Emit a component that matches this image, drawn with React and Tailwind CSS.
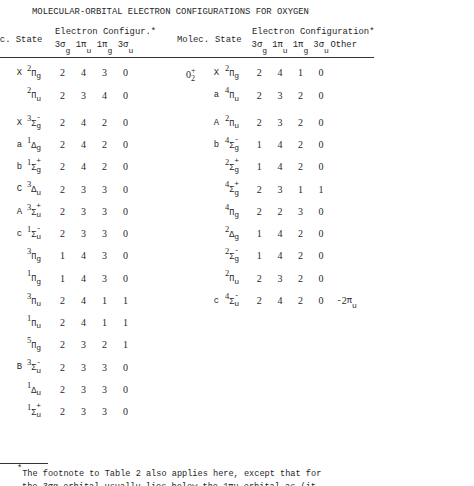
// Scanned table: molecular-orbital electron configurations for oxygen (O2 and O2+).
const leftRows = [
  { l: "X", t: ["2", "Π", "g", ""], n: "2430" },
  { l: "", t: ["2", "Π", "u", ""], n: "2340" },
  { l: "X", t: ["3", "Σ", "g", "-"], n: "2420" },
  { l: "a", t: ["1", "Δ", "g", ""], n: "2420" },
  { l: "b", t: ["1", "Σ", "g", "+"], n: "2420" },
  { l: "C", t: ["3", "Δ", "u", ""], n: "2330" },
  { l: "A", t: ["3", "Σ", "u", "+"], n: "2330" },
  { l: "c", t: ["1", "Σ", "u", "-"], n: "2330" },
  { l: "", t: ["3", "Π", "g", ""], n: "1430" },
  { l: "", t: ["1", "Π", "g", ""], n: "1430" },
  { l: "", t: ["3", "Π", "u", ""], n: "2411" },
  { l: "", t: ["1", "Π", "u", ""], n: "2411" },
  { l: "", t: ["5", "Π", "g", ""], n: "2321" },
  { l: "B", t: ["3", "Σ", "u", "-"], n: "2330" },
  { l: "", t: ["1", "Δ", "u", ""], n: "2330" },
  { l: "", t: ["1", "Σ", "u", "+"], n: "2330" },
];

const rightRows = [
  { mol: true, l: "X", t: ["2", "Π", "g", ""], n: "2410" },
  { l: "a", t: ["4", "Π", "u", ""], n: "2320" },
  { l: "A", t: ["2", "Π", "u", ""], n: "2320" },
  { l: "b", t: ["4", "Σ", "g", "-"], n: "1420" },
  { l: "", t: ["2", "Σ", "g", "+"], n: "1420" },
  { l: "", t: ["4", "Σ", "g", "+"], n: "2311" },
  { l: "", t: ["4", "Π", "g", ""], n: "2230" },
  { l: "", t: ["2", "Δ", "g", ""], n: "1420" },
  { l: "", t: ["2", "Σ", "g", "-"], n: "1420" },
  { l: "", t: ["2", "Π", "u", ""], n: "2320" },
  { l: "c", t: ["4", "Σ", "u", "-"], n: "2420", other: true },
];

const orbitals = [
  ["3", "σ", "g"],
  ["1", "π", "u"],
  ["1", "π", "g"],
  ["3", "σ", "u"],
];

const digit = "shrink-0 text-center font-['Liberation_Serif',serif] text-[10px]";

function Term({ t }) {
  const [m, L, p, sign] = t;
  return (
    <span className="inline-flex items-center leading-none">
      <span className="font-['Liberation_Serif',serif] text-[8.5px] -translate-y-[5px]">{m}</span>
      <span className="text-[8.5px] translate-y-[1px]">{L}</span>
      <span className="flex flex-col text-[8px] leading-[8px]">
        <span className="h-[8px] -translate-y-[2px]">{sign}</span>
        <span className="translate-y-[-1px]">{p}</span>
      </span>
    </span>
  );
}

function Orb({ o }) {
  return (
    <span className="inline-flex items-center leading-none">
      {o[0]}
      {o[1]}
      <span className="text-[8px] translate-y-[6px]">{o[2]}</span>
    </span>
  );
}

export default function App() {
  return (
    <div className="relative h-[486px] w-[474px] overflow-hidden bg-white font-['Liberation_Mono',monospace] text-[8.9px] text-[#1f1f1f]">
      <div className="pl-[32px] pt-[7px] leading-[11px] whitespace-nowrap">
        MOLECULAR-ORBITAL ELECTRON CONFIGURATIONS FOR OXYGEN
      </div>

      {/* header */}
      <div className="mt-[9px] flex h-[31px] w-[374px] border-b border-[#333] leading-[11px]">
        <div className="w-[52px] shrink-0 pt-[8px]">
          <span className="ml-[-21.5px] whitespace-nowrap">Molec. State</span>
        </div>
        <div className="w-[84px] shrink-0">
          <div className="whitespace-nowrap pl-[3px]">Electron Configur.*</div>
          <div className="mt-[1.5px] flex">
            {orbitals.map((o, i) => (
              <div key={i} className="w-[21px] text-center">
                <Orb o={o} />
              </div>
            ))}
          </div>
        </div>
        <div className="w-[72px] shrink-0 pl-[41px] pt-[8px]">Molec.</div>
        <div className="w-[41px] shrink-0 pl-[7px] pt-[8px]">State</div>
        <div className="flex-1">
          <div className="whitespace-nowrap pl-[3px]">Electron Configuration*</div>
          <div className="mt-[1.5px] flex">
            {orbitals.map((o, i) => (
              <div key={i} className="w-[20.6px] text-center">
                <Orb o={o} />
              </div>
            ))}
            <div className="ml-[-1px]">Other</div>
          </div>
        </div>
      </div>

      {/* rows */}
      <div className="mt-[3.6px]">
        {leftRows.map((r, i) => {
          const rr = rightRows[i];
          return (
            <div
              key={i}
              className={
                "flex items-center leading-none " +
                (i === 0 ? "h-[23px]" : "h-[22.25px]") +
                (i === 2 ? " mt-[5px]" : "")
              }
            >
              <div className="flex w-[52px] shrink-0 items-center">
                <span className="w-[22px] text-right">{r.l}</span>
                <span className="pl-[5px]">
                  <Term t={r.t} />
                </span>
              </div>
              {r.n.split("").map((d, j) => (
                <span key={j} className={"w-[21px] " + digit}>
                  {d}
                </span>
              ))}

              <div className="w-[72px] shrink-0 pl-[50px]">
                {rr && rr.mol && (
                  <span className="inline-flex items-center translate-y-[2px] font-['Liberation_Serif',serif] text-[10px]">
                    0
                    <span className="flex flex-col text-[8px] leading-[7px]">
                      <span className="-translate-y-[1px]">+</span>
                      <span>2</span>
                    </span>
                  </span>
                )}
              </div>
              {rr && (
                <>
                  <div className="flex w-[41px] shrink-0 items-center">
                    <span className="w-[11px] text-right">{rr.l}</span>
                    <span className="pl-[6px]">
                      <Term t={rr.t} />
                    </span>
                  </div>
                  {rr.n.split("").map((d, j) => (
                    <span key={j} className={"w-[20.6px] " + digit}>
                      {d}
                    </span>
                  ))}
                  {rr.other && (
                    <span className="inline-flex items-center pl-[5px]">
                      -<span className="font-['Liberation_Serif',serif] text-[10px]">2</span>π
                      <span className="text-[8px] translate-y-[5px]">u</span>
                    </span>
                  )}
                </>
              )}
            </div>
          );
        })}
      </div>

      {/* footnote */}
      <div className="mt-[39.6px] h-[1px] w-[48px] bg-[#333]" />
      <div className="mt-[5.5px] pl-[17px] text-[8.6px] leading-[11px] whitespace-nowrap">
        <span className="inline-block -translate-y-[5px]">*</span>
        The footnote to Table 2 also applies here, except that for
      </div>
      <div className="mt-[2px] pl-[22px] text-[8.6px] leading-[11px] whitespace-nowrap">
        the 3σg orbital usually lies below the 1πu orbital as (it
      </div>
    </div>
  );
}
